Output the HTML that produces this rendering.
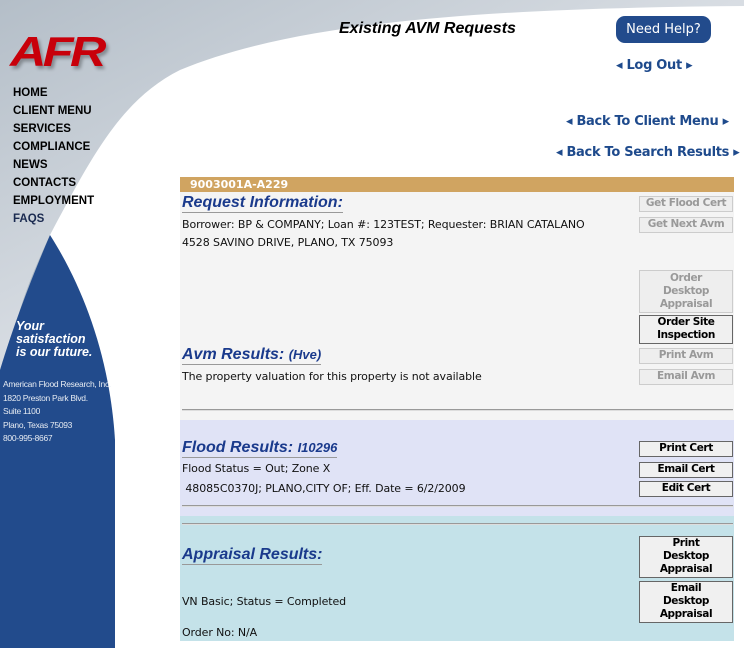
<!DOCTYPE html>
<html><head><meta charset="utf-8"><style>
body{margin:0;width:744px;height:648px;position:relative;overflow:hidden;background:#fff;font-family:"DejaVu Sans",sans-serif;}
.a{position:absolute;white-space:nowrap}
.nav{position:absolute;left:13px;font:bold 11.5px "Liberation Sans",sans-serif;color:#000}
.lnk{position:absolute;font:bold 13px "DejaVu Sans",sans-serif;color:#1e4a8c;letter-spacing:-0.3px}
.h{position:absolute;left:182px;font:italic bold 16px "Liberation Sans",sans-serif;color:#1a3a8c;border-bottom:1px solid #999;line-height:18px}
.h small{font-size:13px}
.t{position:absolute;left:182px;font:11px "DejaVu Sans",sans-serif;color:#111;white-space:nowrap;letter-spacing:-0.1px}
.b{position:absolute;left:639px;width:92px;border:1px solid #ccc;background:#eee;color:#999;font:bold 10.5px "DejaVu Sans",sans-serif;text-align:center;line-height:13px;letter-spacing:-0.4px}
.b.on{border-color:#666;color:#000;background:#f0f0f0}
.hr{position:absolute;left:182px;width:551px;height:0;border-top:1px solid #999;border-bottom:1px solid #ddd}
</style></head><body>
<svg class="a" style="left:0;top:0" width="744" height="648">
<defs><linearGradient id="g" x1="0" y1="0" x2="1" y2="1"><stop offset="0" stop-color="#b4bec8"/><stop offset="0.5" stop-color="#d8dde3"/><stop offset="1" stop-color="#c0c9d2"/></linearGradient></defs>
<path d="M0 0 H744 V6 C500 8 300 20 180 70 C120 100 90 160 50 235 L0 370 Z" fill="url(#g)"/>
<path d="M0 370 L50 235 C20 300 5 340 0 450 Z" fill="#a9b6c4"/>
<path d="M50 235 C85 290 110 360 115 440 L115 648 H0 V370 C15 320 35 270 50 235 Z" fill="#224b8c"/>
</svg>
<div class="a" style="left:10px;top:28px;font:italic 900 42px 'Liberation Sans',sans-serif;color:#c8000a;letter-spacing:-3px;transform:scaleX(1.2);transform-origin:left;text-shadow:2px 3px 3px rgba(0,0,0,.3)">AFR</div>
<div class="nav" style="top:87px">HOME</div>
<div class="nav" style="top:105px">CLIENT MENU</div>
<div class="nav" style="top:123px">SERVICES</div>
<div class="nav" style="top:141px">COMPLIANCE</div>
<div class="nav" style="top:159px">NEWS</div>
<div class="nav" style="top:177px">CONTACTS</div>
<div class="nav" style="top:195px">EMPLOYMENT</div>
<div class="nav" style="top:213px;color:#1a2a50">FAQS</div>
<div class="a" style="left:16px;top:320px;font:italic bold 12.5px 'Liberation Sans',sans-serif;color:#fff;line-height:13px">Your<br>satisfaction<br>is our future.</div>
<div class="a" style="left:3px;top:378px;font:8.5px 'Liberation Sans',sans-serif;color:#e6ebf2;line-height:13.5px;letter-spacing:-0.3px">American Flood Research, Inc.<br>1820 Preston Park Blvd.<br>Suite 1100<br>Plano, Texas 75093<br>800-995-8667</div>
<div class="a" style="left:339px;top:20px;font:italic bold 16px 'Liberation Sans',sans-serif;color:#000">Existing AVM Requests</div>
<div class="a" style="left:616px;top:16px;width:95px;height:27px;border-radius:9px;background:#224b8c;color:#fff;font:13px 'DejaVu Sans',sans-serif;text-align:center;line-height:27px">Need Help?</div>
<div class="lnk" style="left:616px;top:58px">◂ Log Out ▸</div>
<div class="lnk" style="left:566px;top:114px">◂ Back To Client Menu ▸</div>
<div class="lnk" style="left:556px;top:145px">◂ Back To Search Results ▸</div>
<div class="a" style="left:180px;top:177px;width:554px;height:15px;background:#d0a461;color:#fff;font:bold 11px 'DejaVu Sans',sans-serif;line-height:15px;padding-left:10px;box-sizing:border-box">9003001A-A229</div>
<div class="a" style="left:180px;top:192px;width:554px;height:228px;background:#f4f4f4"></div>
<div class="a" style="left:180px;top:420px;width:554px;height:96px;background:#e0e3f6"></div>
<div class="a" style="left:180px;top:516px;width:554px;height:125px;background:#c4e2e9"></div>
<div class="h" style="top:194px">Request Information:</div>
<div class="t" style="top:218px">Borrower: BP &amp; COMPANY; Loan #: 123TEST; Requester: BRIAN CATALANO</div>
<div class="t" style="top:236px">4528 SAVINO DRIVE, PLANO, TX 75093</div>
<div class="h" style="top:346px">Avm Results: <small>(Hve)</small></div>
<div class="t" style="top:370px">The property valuation for this property is not available</div>
<div class="hr" style="top:409px"></div>
<div class="h" style="top:439px">Flood Results: <small>I10296</small></div>
<div class="t" style="top:462px">Flood Status = Out; Zone X</div>
<div class="t" style="top:482px">&nbsp;48085C0370J; PLANO,CITY OF; Eff. Date = 6/2/2009</div>
<div class="hr" style="top:505px"></div>
<div class="hr" style="top:523px"></div>
<div class="h" style="top:546px">Appraisal Results:</div>
<div class="t" style="top:595px">VN Basic; Status = Completed</div>
<div class="t" style="top:626px">Order No: N/A</div>
<div class="b" style="top:196px;height:14px">Get Flood Cert</div>
<div class="b" style="top:217px;height:14px">Get Next Avm</div>
<div class="b" style="top:270px;height:40px;padding-top:1px">Order<br>Desktop<br>Appraisal</div>
<div class="b on" style="top:315px;height:27px">Order Site<br>Inspection</div>
<div class="b" style="top:348px;height:14px">Print Avm</div>
<div class="b" style="top:369px;height:14px">Email Avm</div>
<div class="b on" style="top:441px;height:14px">Print Cert</div>
<div class="b on" style="top:462px;height:14px">Email Cert</div>
<div class="b on" style="top:481px;height:14px">Edit Cert</div>
<div class="b on" style="top:536px;height:40px">Print<br>Desktop<br>Appraisal</div>
<div class="b on" style="top:581px;height:40px">Email<br>Desktop<br>Appraisal</div>
</body></html>
